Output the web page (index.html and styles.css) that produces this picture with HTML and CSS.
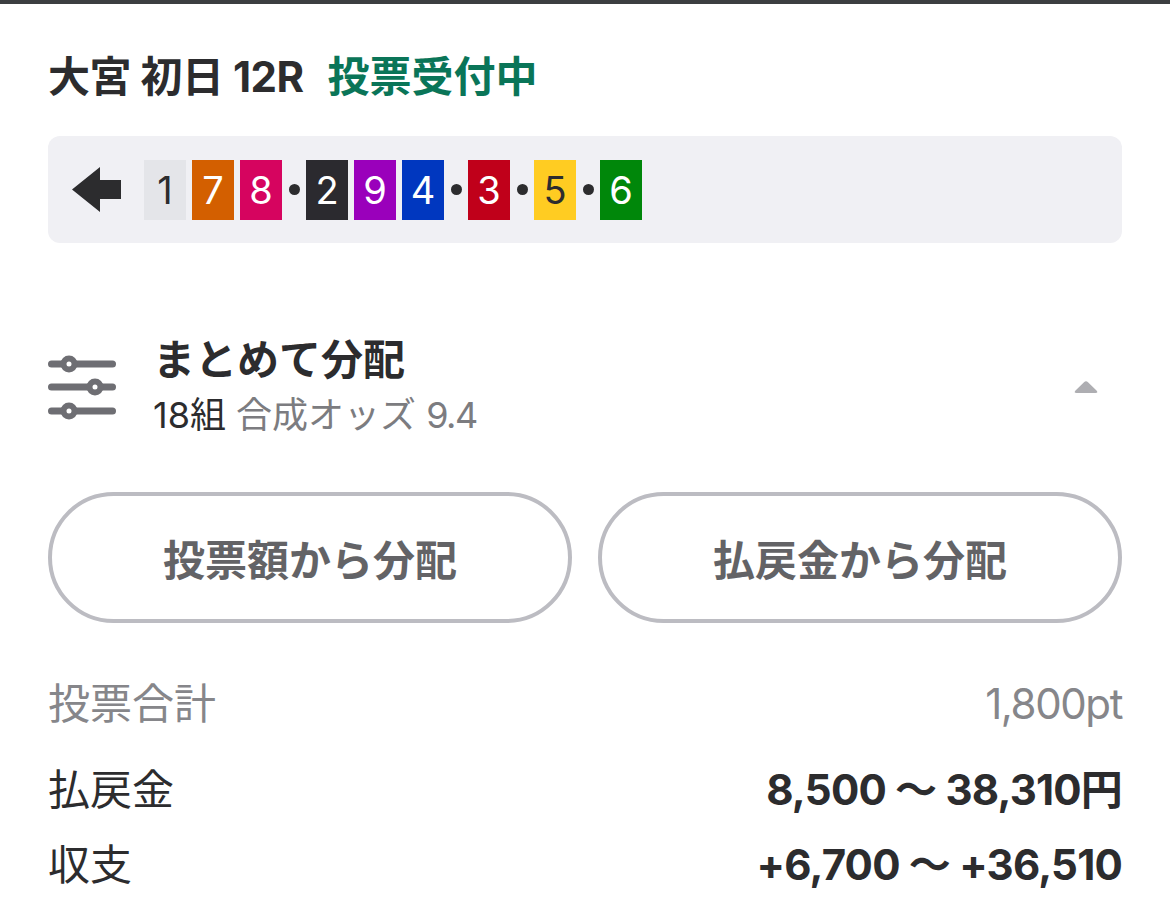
FILE: index.html
```html
<!DOCTYPE html>
<html lang="ja">
<head>
<meta charset="utf-8">
<link rel="stylesheet" href="styles.css">
</head>
<body>
<div class="topbar"></div>
<main class="page">
  <h1 class="header"><span class="race">大宮 初日 12R</span><span class="status">投票受付中</span></h1>

  <div class="ticket">
    <svg class="arrow" width="50" height="48" viewBox="0 0 50 48"><path d="M0 23.5 L28 1 L28 14 L49 14 L49 33 L28 33 L28 46 Z" fill="#2c2c2e"/></svg>
    <div class="nums">
      <span class="num n1">1</span>
      <span class="num n7">7</span>
      <span class="num n8">8</span>
      <span class="sep"></span>
      <span class="num n2">2</span>
      <span class="num n9">9</span>
      <span class="num n4">4</span>
      <span class="sep"></span>
      <span class="num n3">3</span>
      <span class="sep"></span>
      <span class="num n5">5</span>
      <span class="sep"></span>
      <span class="num n6">6</span>
    </div>
  </div>

  <div class="summary">
    <svg class="sliders" width="68" height="68" viewBox="0 0 68 68">
      <g stroke="#6e6e73" stroke-width="7" stroke-linecap="round">
        <line x1="3.5" y1="11" x2="64.5" y2="11"/>
        <line x1="3.5" y1="34" x2="64.5" y2="34"/>
        <line x1="3.5" y1="58" x2="64.5" y2="58"/>
      </g>
      <g stroke="#6e6e73" stroke-width="6" fill="#fff">
        <circle cx="21" cy="11" r="5.5"/>
        <circle cx="47" cy="34" r="5.5"/>
        <circle cx="21" cy="58" r="5.5"/>
      </g>
    </svg>
    <div class="summary-text">
      <div class="summary-title">まとめて分配</div>
      <div class="summary-sub"><span class="count">18組</span> 合成オッズ <span class="odds">9.4</span></div>
    </div>
    <svg class="caret" width="26" height="14" viewBox="0 0 26 14"><path d="M11 2.2 Q13 0.2 15 2.2 L23.5 10.5 Q25.5 13 22.5 13 L3.5 13 Q0.5 13 2.5 10.5 Z" fill="#aeaeb2"/></svg>
  </div>

  <div class="buttons">
    <button class="pill">投票額から分配</button>
    <button class="pill">払戻金から分配</button>
  </div>

  <div class="row total"><span>投票合計</span><span class="amount">1,800pt</span></div>
  <div class="row payout"><span>払戻金</span><span class="val">8,500 〜 38,310円</span></div>
  <div class="row balance"><span>収支</span><span class="val">+6,700 〜 +36,510</span></div>
</main>
</body>
</html>
```

FILE: styles.css
```css
html, body {
  margin: 0;
  padding: 0;
  background: #ffffff;
}
body {
  font-family: "Inter", "Noto Sans CJK JP", sans-serif;
  color: #2c2c2e;
}
.topbar {
  height: 4px;
  background: #3c3e41;
}
.page {
  padding: 0 48px;
}
.header {
  margin: 45px 0 0;
  font-size: 42px;
  line-height: 56px;
  font-weight: 700;
  display: flex;
  color: #2c2c2e;
}
.race {
  letter-spacing: -0.5px;
}
.status {
  margin-left: 24px;
  color: #0a7558;
}
.ticket {
  margin-top: 31px;
  height: 107px;
  box-sizing: border-box;
  background: #f0f0f4;
  border-radius: 12px;
  display: flex;
  align-items: center;
  padding-left: 24px;
}
.arrow {
  display: block;
  flex: none;
}
.nums {
  display: flex;
  align-items: center;
  gap: 6px;
  margin-left: 22px;
}
.num {
  width: 42px;
  height: 60px;
  display: flex;
  align-items: center;
  justify-content: center;
  font-size: 38px;
  font-weight: 400;
  color: #ffffff;
}
.n1 { background: #e4e5e9; color: #2c2c2e; }
.n7 { background: #d35f00; }
.n8 { background: #d6045f; }
.n2 { background: #2b2a2f; }
.n9 { background: #9a00bb; }
.n4 { background: #0037bf; }
.n3 { background: #c0001a; }
.n5 { background: #ffcc22; color: #2c2c2e; }
.n6 { background: #00870a; }
.sep {
  width: 12px;
  height: 12px;
  display: flex;
  align-items: center;
  justify-content: center;
}
.sep::before {
  content: "";
  flex: none;
  width: 11px;
  height: 11px;
  border-radius: 50%;
  background: #2c2c2e;
}
.summary {
  margin-top: 89px;
  display: flex;
  align-items: center;
}
.sliders {
  display: block;
  flex: none;
}
.summary-text {
  margin-left: 37px;
  flex: 1;
}
.summary-title {
  font-size: 42px;
  line-height: 56px;
  font-weight: 700;
  color: #2c2c2e;
}
.summary-sub {
  font-size: 36px;
  line-height: 54px;
  color: #7c7c80;
}
.odds {
  letter-spacing: -1.5px;
}
.count {
  color: #2c2c2e;
}
.caret {
  display: block;
  margin-right: 23px;
}
.buttons {
  margin-top: 50px;
  display: grid;
  grid-template-columns: 1fr 1fr;
  gap: 26px;
}
.pill {
  height: 131px;
  box-sizing: border-box;
  border: 4px solid #bcbcc2;
  border-radius: 66px;
  background: #ffffff;
  font-family: inherit;
  font-size: 42px;
  font-weight: 700;
  color: #636366;
  padding: 0;
}
.row {
  display: flex;
  justify-content: space-between;
  font-size: 42px;
  line-height: 56px;
}
.total {
  margin-top: 53px;
  color: #86868a;
}
.amount {
  letter-spacing: -1.4px;
}
.payout {
  margin-top: 30px;
}
.balance {
  margin-top: 19px;
}
.val {
  font-weight: 700;
  letter-spacing: -0.8px;
}
```
